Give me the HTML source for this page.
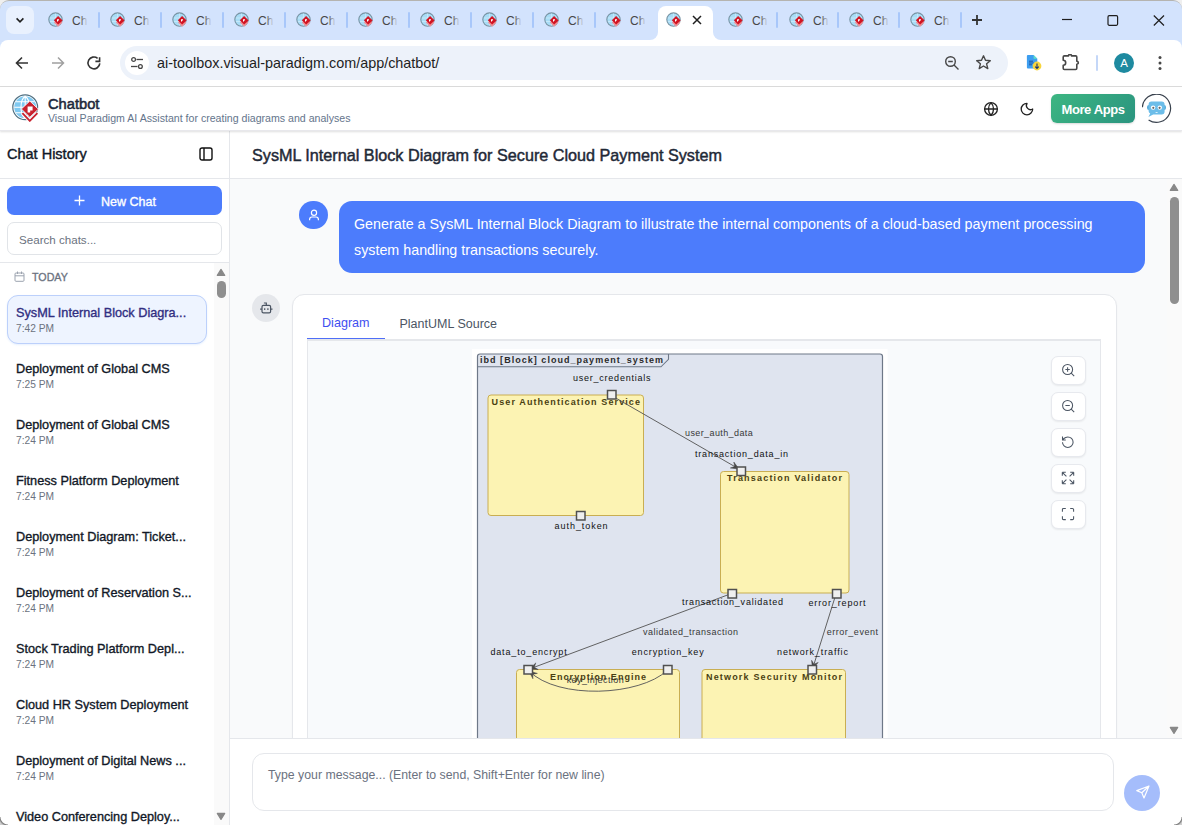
<!DOCTYPE html>
<html><head><meta charset="utf-8">
<style>
*{box-sizing:border-box;margin:0;padding:0}
html,body{width:1182px;height:825px;overflow:hidden;background:#fff;font-family:"Liberation Sans",sans-serif}
.a{position:absolute}
svg{display:block}
.ti{position:absolute;top:12px;width:16px;height:16px}
.tt{position:absolute;top:13px;font-size:12px;color:#474747;line-height:16px;width:15px;overflow:hidden;white-space:nowrap}
.fd{position:absolute;top:12px;width:9px;height:17px;background:linear-gradient(90deg,rgba(211,227,253,0),#d3e3fd 85%)}
.sep{position:absolute;top:12px;width:2px;height:16px;background:#a8c7fa;border-radius:1px}
.item{position:absolute;left:7px;width:200px;height:49px}
.item .it{position:absolute;left:9px;top:10.6px;font-size:12.7px;color:#111827;-webkit-text-stroke:0.35px #111827;white-space:nowrap;line-height:15px}
.item .im{position:absolute;left:9px;top:27.2px;font-size:10.2px;color:#6b7280;white-space:nowrap;line-height:13px}
.zb{position:absolute;left:1051px;width:34.5px;height:28.8px;background:#fff;border:1px solid #e7e9ee;border-radius:7px;box-shadow:0 1px 2px rgba(0,0,0,.07)}
.zb svg{position:absolute;left:9px;top:6px}
.dg text{font-family:"Liberation Sans",sans-serif}
</style></head><body>
<div class="a" style="left:0;top:0;width:1182px;height:40px;background:#d3e3fd"></div>
<div class="a" style="left:0;top:0;width:1182px;height:12px;background:#efefef"></div>
<div class="a" style="left:0;top:0;width:1182px;height:40px;background:#d3e3fd;border-top:1px solid #b5b4b0;border-radius:9px 9px 0 0"></div>
<div class="a" style="left:6px;top:6px;width:28px;height:28px;border-radius:8px;background:#e9f1fe"></div>
<svg class="a" style="left:14px;top:14px" width="12" height="12" viewBox="0 0 12 12"><path d="M2.6 4.4L6 7.8L9.4 4.4" fill="none" stroke="#1f1f1f" stroke-width="1.6"/></svg>
<div class="ti" style="left:48px"><svg width="16" height="16" viewBox="0 0 16 16"><circle cx="7.5" cy="7.6" r="6.7" fill="#a8dcf6" stroke="#7893a3" stroke-width="1.1"/><path d="M2 6H13M2 9.5H13M7.5 1.5V13.5" stroke="#d6f0fc" stroke-width="0.6"/><path d="M5.9 10.4L10.1 14.8L14.4 10.5L10.1 6.4Z" fill="#ee8f95"/><path d="M10.1 4.1L14.6 8.4L10.1 12.4L5.8 8.2Z" fill="#d11423"/><path d="M9 7.2H11V8.6H10V9.4H9Z" fill="#fff"/></svg></div><div class="tt" style="left:72px">Cha</div><div class="fd" style="left:80px"></div>
<div class="ti" style="left:110px"><svg width="16" height="16" viewBox="0 0 16 16"><circle cx="7.5" cy="7.6" r="6.7" fill="#a8dcf6" stroke="#7893a3" stroke-width="1.1"/><path d="M2 6H13M2 9.5H13M7.5 1.5V13.5" stroke="#d6f0fc" stroke-width="0.6"/><path d="M5.9 10.4L10.1 14.8L14.4 10.5L10.1 6.4Z" fill="#ee8f95"/><path d="M10.1 4.1L14.6 8.4L10.1 12.4L5.8 8.2Z" fill="#d11423"/><path d="M9 7.2H11V8.6H10V9.4H9Z" fill="#fff"/></svg></div><div class="tt" style="left:134px">Cha</div><div class="fd" style="left:142px"></div>
<div class="ti" style="left:172px"><svg width="16" height="16" viewBox="0 0 16 16"><circle cx="7.5" cy="7.6" r="6.7" fill="#a8dcf6" stroke="#7893a3" stroke-width="1.1"/><path d="M2 6H13M2 9.5H13M7.5 1.5V13.5" stroke="#d6f0fc" stroke-width="0.6"/><path d="M5.9 10.4L10.1 14.8L14.4 10.5L10.1 6.4Z" fill="#ee8f95"/><path d="M10.1 4.1L14.6 8.4L10.1 12.4L5.8 8.2Z" fill="#d11423"/><path d="M9 7.2H11V8.6H10V9.4H9Z" fill="#fff"/></svg></div><div class="tt" style="left:196px">Cha</div><div class="fd" style="left:204px"></div>
<div class="ti" style="left:234px"><svg width="16" height="16" viewBox="0 0 16 16"><circle cx="7.5" cy="7.6" r="6.7" fill="#a8dcf6" stroke="#7893a3" stroke-width="1.1"/><path d="M2 6H13M2 9.5H13M7.5 1.5V13.5" stroke="#d6f0fc" stroke-width="0.6"/><path d="M5.9 10.4L10.1 14.8L14.4 10.5L10.1 6.4Z" fill="#ee8f95"/><path d="M10.1 4.1L14.6 8.4L10.1 12.4L5.8 8.2Z" fill="#d11423"/><path d="M9 7.2H11V8.6H10V9.4H9Z" fill="#fff"/></svg></div><div class="tt" style="left:258px">Cha</div><div class="fd" style="left:266px"></div>
<div class="ti" style="left:296px"><svg width="16" height="16" viewBox="0 0 16 16"><circle cx="7.5" cy="7.6" r="6.7" fill="#a8dcf6" stroke="#7893a3" stroke-width="1.1"/><path d="M2 6H13M2 9.5H13M7.5 1.5V13.5" stroke="#d6f0fc" stroke-width="0.6"/><path d="M5.9 10.4L10.1 14.8L14.4 10.5L10.1 6.4Z" fill="#ee8f95"/><path d="M10.1 4.1L14.6 8.4L10.1 12.4L5.8 8.2Z" fill="#d11423"/><path d="M9 7.2H11V8.6H10V9.4H9Z" fill="#fff"/></svg></div><div class="tt" style="left:320px">Cha</div><div class="fd" style="left:328px"></div>
<div class="ti" style="left:358px"><svg width="16" height="16" viewBox="0 0 16 16"><circle cx="7.5" cy="7.6" r="6.7" fill="#a8dcf6" stroke="#7893a3" stroke-width="1.1"/><path d="M2 6H13M2 9.5H13M7.5 1.5V13.5" stroke="#d6f0fc" stroke-width="0.6"/><path d="M5.9 10.4L10.1 14.8L14.4 10.5L10.1 6.4Z" fill="#ee8f95"/><path d="M10.1 4.1L14.6 8.4L10.1 12.4L5.8 8.2Z" fill="#d11423"/><path d="M9 7.2H11V8.6H10V9.4H9Z" fill="#fff"/></svg></div><div class="tt" style="left:382px">Cha</div><div class="fd" style="left:390px"></div>
<div class="ti" style="left:420px"><svg width="16" height="16" viewBox="0 0 16 16"><circle cx="7.5" cy="7.6" r="6.7" fill="#a8dcf6" stroke="#7893a3" stroke-width="1.1"/><path d="M2 6H13M2 9.5H13M7.5 1.5V13.5" stroke="#d6f0fc" stroke-width="0.6"/><path d="M5.9 10.4L10.1 14.8L14.4 10.5L10.1 6.4Z" fill="#ee8f95"/><path d="M10.1 4.1L14.6 8.4L10.1 12.4L5.8 8.2Z" fill="#d11423"/><path d="M9 7.2H11V8.6H10V9.4H9Z" fill="#fff"/></svg></div><div class="tt" style="left:444px">Cha</div><div class="fd" style="left:452px"></div>
<div class="ti" style="left:482px"><svg width="16" height="16" viewBox="0 0 16 16"><circle cx="7.5" cy="7.6" r="6.7" fill="#a8dcf6" stroke="#7893a3" stroke-width="1.1"/><path d="M2 6H13M2 9.5H13M7.5 1.5V13.5" stroke="#d6f0fc" stroke-width="0.6"/><path d="M5.9 10.4L10.1 14.8L14.4 10.5L10.1 6.4Z" fill="#ee8f95"/><path d="M10.1 4.1L14.6 8.4L10.1 12.4L5.8 8.2Z" fill="#d11423"/><path d="M9 7.2H11V8.6H10V9.4H9Z" fill="#fff"/></svg></div><div class="tt" style="left:506px">Cha</div><div class="fd" style="left:514px"></div>
<div class="ti" style="left:544px"><svg width="16" height="16" viewBox="0 0 16 16"><circle cx="7.5" cy="7.6" r="6.7" fill="#a8dcf6" stroke="#7893a3" stroke-width="1.1"/><path d="M2 6H13M2 9.5H13M7.5 1.5V13.5" stroke="#d6f0fc" stroke-width="0.6"/><path d="M5.9 10.4L10.1 14.8L14.4 10.5L10.1 6.4Z" fill="#ee8f95"/><path d="M10.1 4.1L14.6 8.4L10.1 12.4L5.8 8.2Z" fill="#d11423"/><path d="M9 7.2H11V8.6H10V9.4H9Z" fill="#fff"/></svg></div><div class="tt" style="left:568px">Cha</div><div class="fd" style="left:576px"></div>
<div class="ti" style="left:606px"><svg width="16" height="16" viewBox="0 0 16 16"><circle cx="7.5" cy="7.6" r="6.7" fill="#a8dcf6" stroke="#7893a3" stroke-width="1.1"/><path d="M2 6H13M2 9.5H13M7.5 1.5V13.5" stroke="#d6f0fc" stroke-width="0.6"/><path d="M5.9 10.4L10.1 14.8L14.4 10.5L10.1 6.4Z" fill="#ee8f95"/><path d="M10.1 4.1L14.6 8.4L10.1 12.4L5.8 8.2Z" fill="#d11423"/><path d="M9 7.2H11V8.6H10V9.4H9Z" fill="#fff"/></svg></div><div class="tt" style="left:630px">Cha</div><div class="fd" style="left:638px"></div>
<div class="ti" style="left:728px"><svg width="16" height="16" viewBox="0 0 16 16"><circle cx="7.5" cy="7.6" r="6.7" fill="#a8dcf6" stroke="#7893a3" stroke-width="1.1"/><path d="M2 6H13M2 9.5H13M7.5 1.5V13.5" stroke="#d6f0fc" stroke-width="0.6"/><path d="M5.9 10.4L10.1 14.8L14.4 10.5L10.1 6.4Z" fill="#ee8f95"/><path d="M10.1 4.1L14.6 8.4L10.1 12.4L5.8 8.2Z" fill="#d11423"/><path d="M9 7.2H11V8.6H10V9.4H9Z" fill="#fff"/></svg></div><div class="tt" style="left:752px">Cha</div><div class="fd" style="left:760px"></div>
<div class="ti" style="left:789px"><svg width="16" height="16" viewBox="0 0 16 16"><circle cx="7.5" cy="7.6" r="6.7" fill="#a8dcf6" stroke="#7893a3" stroke-width="1.1"/><path d="M2 6H13M2 9.5H13M7.5 1.5V13.5" stroke="#d6f0fc" stroke-width="0.6"/><path d="M5.9 10.4L10.1 14.8L14.4 10.5L10.1 6.4Z" fill="#ee8f95"/><path d="M10.1 4.1L14.6 8.4L10.1 12.4L5.8 8.2Z" fill="#d11423"/><path d="M9 7.2H11V8.6H10V9.4H9Z" fill="#fff"/></svg></div><div class="tt" style="left:813px">Cha</div><div class="fd" style="left:821px"></div>
<div class="ti" style="left:849px"><svg width="16" height="16" viewBox="0 0 16 16"><circle cx="7.5" cy="7.6" r="6.7" fill="#a8dcf6" stroke="#7893a3" stroke-width="1.1"/><path d="M2 6H13M2 9.5H13M7.5 1.5V13.5" stroke="#d6f0fc" stroke-width="0.6"/><path d="M5.9 10.4L10.1 14.8L14.4 10.5L10.1 6.4Z" fill="#ee8f95"/><path d="M10.1 4.1L14.6 8.4L10.1 12.4L5.8 8.2Z" fill="#d11423"/><path d="M9 7.2H11V8.6H10V9.4H9Z" fill="#fff"/></svg></div><div class="tt" style="left:873px">Cha</div><div class="fd" style="left:881px"></div>
<div class="ti" style="left:910px"><svg width="16" height="16" viewBox="0 0 16 16"><circle cx="7.5" cy="7.6" r="6.7" fill="#a8dcf6" stroke="#7893a3" stroke-width="1.1"/><path d="M2 6H13M2 9.5H13M7.5 1.5V13.5" stroke="#d6f0fc" stroke-width="0.6"/><path d="M5.9 10.4L10.1 14.8L14.4 10.5L10.1 6.4Z" fill="#ee8f95"/><path d="M10.1 4.1L14.6 8.4L10.1 12.4L5.8 8.2Z" fill="#d11423"/><path d="M9 7.2H11V8.6H10V9.4H9Z" fill="#fff"/></svg></div><div class="tt" style="left:934px">Cha</div><div class="fd" style="left:942px"></div>
<div class="sep" style="left:98px"></div><div class="sep" style="left:160px"></div><div class="sep" style="left:222px"></div><div class="sep" style="left:284px"></div><div class="sep" style="left:346px"></div><div class="sep" style="left:408px"></div><div class="sep" style="left:470px"></div><div class="sep" style="left:532px"></div><div class="sep" style="left:594px"></div><div class="sep" style="left:776px"></div><div class="sep" style="left:837px"></div><div class="sep" style="left:898px"></div><div class="sep" style="left:960px"></div>
<div class="a" style="left:650px;top:32px;width:8px;height:8px;background:#fff"></div><div class="a" style="left:642px;top:24px;width:16px;height:16px;background:#d3e3fd;border-radius:0 0 8px 0"></div><div class="a" style="left:713px;top:32px;width:8px;height:8px;background:#fff"></div><div class="a" style="left:713px;top:24px;width:16px;height:16px;background:#d3e3fd;border-radius:0 0 0 8px"></div><div class="a" style="left:658px;top:6px;width:55px;height:34px;background:#fff;border-radius:8px 8px 0 0"></div>
<div class="ti" style="left:666px"><svg width="16" height="16" viewBox="0 0 16 16"><circle cx="7.5" cy="7.6" r="6.7" fill="#a8dcf6" stroke="#7893a3" stroke-width="1.1"/><path d="M2 6H13M2 9.5H13M7.5 1.5V13.5" stroke="#d6f0fc" stroke-width="0.6"/><path d="M5.9 10.4L10.1 14.8L14.4 10.5L10.1 6.4Z" fill="#ee8f95"/><path d="M10.1 4.1L14.6 8.4L10.1 12.4L5.8 8.2Z" fill="#d11423"/><path d="M9 7.2H11V8.6H10V9.4H9Z" fill="#fff"/></svg></div><svg class="a" style="left:692px;top:15px" width="10" height="10" viewBox="0 0 10 10"><path d="M1 1L9 9M9 1L1 9" stroke="#1f1f1f" stroke-width="1.5"/></svg>
<svg class="a" style="left:971px;top:14px" width="12" height="12" viewBox="0 0 12 12"><path d="M6 1V11M1 6H11" stroke="#333" stroke-width="1.8"/></svg>
<svg class="a" style="left:1061px;top:14px" width="12" height="12" viewBox="0 0 12 12"><path d="M1 5.5H11" stroke="#1f1f1f" stroke-width="1.2"/></svg><svg class="a" style="left:1107px;top:15px" width="12" height="11" viewBox="0 0 12 11"><rect x="1" y="0.7" width="9.6" height="9.6" rx="1.2" fill="none" stroke="#1f1f1f" stroke-width="1.2"/></svg><svg class="a" style="left:1153px;top:15px" width="12" height="11" viewBox="0 0 12 11"><path d="M0.8 0.5L11 10.5M11 0.5L0.8 10.5" stroke="#1f1f1f" stroke-width="1.2"/></svg>
<div class="a" style="left:0;top:40px;width:1182px;height:47px;background:#fff;border-bottom:1px solid #dcdcdc;border-radius:8px 8px 0 0"></div>
<div class="a" style="left:0;top:40px;width:1182px;height:10px;background:#d3e3fd"></div><div class="a" style="left:0;top:40px;width:1182px;height:46px;background:#fff;border-radius:8px 8px 0 0"></div>
<svg class="a" style="left:14px;top:55px" width="16" height="16" viewBox="0 0 16 16"><path d="M14 8H2.8M8 2.5L2.5 8L8 13.5" fill="none" stroke="#333" stroke-width="1.6"/></svg><svg class="a" style="left:50px;top:55px" width="16" height="16" viewBox="0 0 16 16"><path d="M2 8H13.2M8 2.5L13.5 8L8 13.5" fill="none" stroke="#a0a0a0" stroke-width="1.5"/></svg><svg class="a" style="left:86px;top:55px" width="16" height="16" viewBox="0 0 16 16"><path d="M13.8 8.4A5.9 5.9 0 1 1 11.6 3.3" fill="none" stroke="#333" stroke-width="1.6"/><path d="M9.4 6.4H13.6V2.2" fill="none" stroke="#333" stroke-width="1.6"/></svg>
<div class="a" style="left:120px;top:46px;width:888px;height:34px;border-radius:17px;background:#edf2fa"></div>
<div class="a" style="left:125px;top:51px;width:24px;height:24px;border-radius:12px;background:#fff"></div><svg class="a" style="left:129px;top:55px" width="16" height="16" viewBox="0 0 16 16"><circle cx="4.6" cy="4.5" r="1.9" fill="none" stroke="#474747" stroke-width="1.3"/><path d="M7.5 4.5H14" stroke="#474747" stroke-width="1.3"/><circle cx="11.4" cy="11.5" r="1.9" fill="none" stroke="#474747" stroke-width="1.3"/><path d="M2 11.5H8.5" stroke="#474747" stroke-width="1.3"/></svg>
<div class="a" style="left:157px;top:54px;font-size:14.4px;line-height:18px;color:#1f1f1f;white-space:nowrap">ai-toolbox.visual-paradigm.com/app/chatbot/</div>
<svg class="a" style="left:944px;top:55px" width="16" height="16" viewBox="0 0 16 16"><circle cx="6.5" cy="6.5" r="4.8" fill="none" stroke="#474747" stroke-width="1.4"/><path d="M4.2 6.5H8.8M10 10L14.5 14.5" stroke="#474747" stroke-width="1.4"/></svg><svg class="a" style="left:975px;top:54px" width="17" height="17" viewBox="0 0 17 17"><path d="M8.5 1.8L10.5 6.3L15.3 6.7L11.6 9.8L12.8 14.6L8.5 12L4.2 14.6L5.4 9.8L1.7 6.7L6.5 6.3Z" fill="none" stroke="#474747" stroke-width="1.4" stroke-linejoin="round"/></svg>
<svg class="a" style="left:1025px;top:54px" width="18" height="18" viewBox="0 0 18 18"><path d="M2.9 1H8.6L12.3 4.7V13.6Q12.3 14.6 11.3 14.6H2.9Q1.9 14.6 1.9 13.6V2Q1.9 1 2.9 1Z" fill="#3d9ef0"/><path d="M8.6 1V4.7H12.3Z" fill="#5fe0c6"/><path d="M4 7.2H8M4 9H8.6M4 10.8H7" stroke="#1d4f9c" stroke-width="0.9"/><circle cx="12" cy="12" r="4.4" fill="#f7d53c"/><path d="M12 9.4V14.4M10.2 12.6L12 14.4L13.8 12.6" fill="none" stroke="#1b3470" stroke-width="1.1"/></svg><svg class="a" style="left:1062px;top:54px" width="18" height="18" viewBox="0 0 18 18"><path d="M2.4 1.9H6.5A1.5 1.5 0 0 1 9.5 1.9H13.6Q14.8 1.9 14.8 3.1V7.2A1.5 1.5 0 0 1 14.8 10.2V14.3Q14.8 15.5 13.6 15.5H2.4Q1.2 15.5 1.2 14.3V11.3A2.5 2.5 0 0 0 1.2 6.3V3.1Q1.2 1.9 2.4 1.9Z" fill="none" stroke="#474747" stroke-width="1.6" stroke-linejoin="round"/></svg>
<div class="a" style="left:1096px;top:55px;width:2px;height:16px;background:#c4d7f8;border-radius:1px"></div><div class="a" style="left:1114px;top:53px;width:20px;height:20px;border-radius:10px;background:#1e8aa0;color:#fff;font-size:11.5px;line-height:20px;text-align:center">A</div><svg class="a" style="left:1154px;top:55px" width="12" height="16" viewBox="0 0 12 16"><circle cx="6" cy="2.5" r="1.5" fill="#474747"/><circle cx="6" cy="8" r="1.5" fill="#474747"/><circle cx="6" cy="13.5" r="1.5" fill="#474747"/></svg>
<div class="a" style="left:0;top:87px;width:1182px;height:44px;background:#fff;box-shadow:0 1px 2px rgba(0,0,0,.13);border-bottom:1px solid #e8e8ec;z-index:2"></div>
<div class="a" style="left:12px;top:94px;z-index:3"><svg width="28" height="28" viewBox="0 0 28 28"><circle cx="13.2" cy="13.3" r="12.4" fill="#fff" stroke="#4f6f80" stroke-width="1.2"/><circle cx="13.2" cy="13.3" r="11" fill="#7fc9f1"/><path d="M2.2 13.3H24.2M13.2 2.3V24.3M3.6 7.8H22.8M3.6 18.8H22.8M13.2 2.3C7.6 6 7.6 20.6 13.2 24.3M13.2 2.3C18.8 6 18.8 20.6 13.2 24.3" fill="none" stroke="#fff" stroke-width="1.1"/><path d="M10.4 19.2L17.8 26.8L25.4 19.2" fill="none" stroke="#fff" stroke-width="3.4"/><path d="M10.4 19.2L17.8 26.8L25.4 19.2" fill="none" stroke="#c8222e" stroke-width="1.9"/><path d="M17.8 7L26.4 15.2L17.8 23.2L9.4 15Z" fill="#c8222e" stroke="#fff" stroke-width="0.8"/><path d="M15.6 12.6H20.6V16.4H18.2V18.6H15.6Z" fill="#fff"/></svg></div>
<div class="a" style="left:48px;top:95.6px;font-size:14.7px;line-height:17px;color:#1e293b;-webkit-text-stroke:0.55px #1e293b;white-space:nowrap;z-index:3">Chatbot</div>
<div class="a" style="left:48px;top:112px;font-size:10.6px;line-height:13px;color:#64748b;white-space:nowrap;z-index:3">Visual Paradigm AI Assistant for creating diagrams and analyses</div>
<svg class="a" style="left:983px;top:100.5px;z-index:3" width="16" height="16" viewBox="0 0 24 24"><circle cx="12" cy="12" r="9.6" fill="none" stroke="#222" stroke-width="2"/><path d="M12 2.4A14 14 0 0 0 12 21.6A14 14 0 0 0 12 2.4M2.4 12H21.6" fill="none" stroke="#222" stroke-width="2"/></svg><svg class="a" style="left:1019px;top:100.5px;z-index:3" width="16" height="16" viewBox="0 0 24 24"><path d="M12 3.5A6.2 6.2 0 0 0 20.5 12A8.6 8.6 0 1 1 12 3.5Z" fill="none" stroke="#222" stroke-width="2" stroke-linejoin="round"/></svg>
<div class="a" style="left:1051px;top:94px;width:84px;height:29px;border-radius:6px;background:linear-gradient(135deg,#3db682,#2a947f);color:#fff;font-weight:bold;font-size:13px;letter-spacing:-0.4px;line-height:31px;text-align:center;box-shadow:0 1px 2px rgba(0,0,0,.15);z-index:3">More Apps</div>
<div class="a" style="left:1142px;top:94px;z-index:3"><svg width="30" height="30" viewBox="0 0 30 30"><path d="M0.4 13.3A14.1 14.1 0 1 1 6.6 25.9" fill="none" stroke="#39424e" stroke-width="1.2"/><rect x="5" y="11" width="19" height="5" rx="2" fill="#5aaedb"/><path d="M9.5 7.4H19.6Q22.6 7.4 22.6 10.4V17.6Q22.6 20.6 19.6 20.6H11.2L6.4 23L8.2 19.6Q6.6 18.6 6.6 17V10.4Q6.6 7.4 9.5 7.4Z" fill="#6cbde9"/><circle cx="11.1" cy="13.6" r="2.2" fill="#fff"/><circle cx="17.8" cy="13.6" r="2.2" fill="#fff"/><circle cx="11.3" cy="13.8" r="1.1" fill="#666"/><circle cx="17.6" cy="13.8" r="1.1" fill="#666"/><path d="M13.6 18.5H15.6" stroke="#d8eefa" stroke-width="1"/></svg></div>
<div class="a" style="left:0;top:130px;width:230px;height:695px;background:#fff;border-right:1px solid #e5e7eb"></div>
<div class="a" style="left:7px;top:146.2px;font-size:14.5px;line-height:17px;color:#111827;-webkit-text-stroke:0.4px #111827;white-space:nowrap">Chat History</div>
<svg class="a" style="left:199px;top:147px" width="14" height="14" viewBox="0 0 14 14"><rect x="1" y="1" width="12" height="12" rx="2" fill="none" stroke="#111" stroke-width="1.4"/><path d="M5 1V13" stroke="#111" stroke-width="1.4"/></svg>
<div class="a" style="left:0;top:178px;width:229px;height:1px;background:#e5e7eb"></div>
<div class="a" style="left:7px;top:186px;width:215px;height:29px;border-radius:7px;background:#4c7cfc"></div>
<svg class="a" style="left:74px;top:195px" width="11" height="11" viewBox="0 0 11 11"><path d="M5.5 0.5V10.5M0.5 5.5H10.5" stroke="#fff" stroke-width="1.3"/></svg><div class="a" style="left:101px;top:194.6px;font-size:12.5px;line-height:15px;color:#fff;-webkit-text-stroke:0.35px #fff;white-space:nowrap">New Chat</div>
<div class="a" style="left:7px;top:222px;width:215px;height:33px;border-radius:7px;background:#fff;border:1px solid #e1e4e8"></div>
<div class="a" style="left:19px;top:233px;font-size:11.6px;line-height:14px;color:#6b7280;white-space:nowrap">Search chats...</div>
<div class="a" style="left:0;top:262px;width:229px;height:1px;background:#e5e7eb"></div>
<div class="a" style="left:214px;top:263px;width:15px;height:562px;background:#fafafa"></div>
<svg class="a" style="left:216.4px;top:267.5px" width="10" height="9" viewBox="0 0 10 9"><path d="M1.3 7.4H8.7L5 1.4Z" fill="#888" stroke="#888" stroke-width="1.2" stroke-linejoin="round"/></svg><div class="a" style="left:217px;top:281px;width:9px;height:17px;border-radius:5px;background:#8f8f8f"></div><svg class="a" style="left:216.4px;top:811.5px" width="10" height="9" viewBox="0 0 10 9"><path d="M1.3 1.4H8.7L5 7.4Z" fill="#888" stroke="#888" stroke-width="1.2" stroke-linejoin="round"/></svg>
<svg class="a" style="left:14px;top:271px" width="11" height="11" viewBox="0 0 11 11"><rect x="1" y="2" width="9" height="8.3" rx="1" fill="none" stroke="#9ca3af" stroke-width="1"/><path d="M1 4.8H10M3.5 0.5V3M7.5 0.5V3" stroke="#9ca3af" stroke-width="1"/></svg><div class="a" style="left:32px;top:271px;font-size:10.7px;line-height:13px;color:#6b7280;-webkit-text-stroke:0.3px #6b7280;white-space:nowrap">TODAY</div>
<div class="item" style="top:295px;background:#eef4ff;border:1px solid #bcd0fb;border-radius:11px;box-shadow:0 1px 2px rgba(59,130,246,.12)"><div class="it" style="color:#312e81;-webkit-text-stroke:0.35px #312e81;left:8px;top:9.6px">SysML Internal Block Diagra...</div><div class="im" style="left:8px;top:26.2px">7:42 PM</div></div>
<div class="item" style="top:351px"><div class="it">Deployment of Global CMS</div><div class="im">7:25 PM</div></div>
<div class="item" style="top:407px"><div class="it">Deployment of Global CMS</div><div class="im">7:24 PM</div></div>
<div class="item" style="top:463px"><div class="it">Fitness Platform Deployment</div><div class="im">7:24 PM</div></div>
<div class="item" style="top:519px"><div class="it">Deployment Diagram: Ticket...</div><div class="im">7:24 PM</div></div>
<div class="item" style="top:575px"><div class="it">Deployment of Reservation S...</div><div class="im">7:24 PM</div></div>
<div class="item" style="top:631px"><div class="it">Stock Trading Platform Depl...</div><div class="im">7:24 PM</div></div>
<div class="item" style="top:687px"><div class="it">Cloud HR System Deployment</div><div class="im">7:24 PM</div></div>
<div class="item" style="top:743px"><div class="it">Deployment of Digital News ...</div><div class="im">7:24 PM</div></div>
<div class="item" style="top:799px"><div class="it">Video Conferencing Deploy...</div><div class="im">7:24 PM</div></div>
<div class="a" style="left:230px;top:130px;width:952px;height:695px;background:#f9fafb"></div>
<div class="a" style="left:230px;top:130px;width:952px;height:49px;background:#fff;border-bottom:1px solid #e5e7eb"></div>
<div class="a" style="left:252.0px;top:145.19px;font-size:16.20px;line-height:20px;white-space:nowrap;color:#1f2937;-webkit-text-stroke:0.45px #1f2937">SysML Internal Block Diagram for Secure Cloud Payment System</div>
<div class="a" style="left:1167px;top:179px;width:15px;height:559px;background:#fafafa"></div>
<svg class="a" style="left:1169px;top:183px" width="10" height="9" viewBox="0 0 10 9"><path d="M1.3 7.4H8.7L5 1.4Z" fill="#888" stroke="#888" stroke-width="1.2" stroke-linejoin="round"/></svg><div class="a" style="left:1170px;top:197px;width:9px;height:107px;border-radius:5px;background:#8f8f8f"></div><svg class="a" style="left:1169px;top:726px" width="10" height="9" viewBox="0 0 10 9"><path d="M1.3 1.4H8.7L5 7.4Z" fill="#888" stroke="#888" stroke-width="1.2" stroke-linejoin="round"/></svg>
<div class="a" style="left:299px;top:201px;width:28.6px;height:28px;border-radius:14px;background:#4c7cfc"></div><svg class="a" style="left:306px;top:206.6px" width="16" height="16" viewBox="0 0 16 16"><circle cx="8" cy="5.8" r="2.6" fill="none" stroke="#fff" stroke-width="1.2"/><path d="M3.6 13.2V12.4Q3.6 10 6 10H10Q12.4 10 12.4 12.4V13.2" fill="none" stroke="#fff" stroke-width="1.2"/></svg>
<div class="a" style="left:339px;top:201px;width:806px;height:72px;border-radius:13px;background:#4c7cfc"></div>
<div class="a" style="left:354.0px;top:215.05px;font-size:14.30px;line-height:18px;white-space:nowrap;color:#fff">Generate a SysML Internal Block Diagram to illustrate the internal components of a cloud-based payment processing</div>
<div class="a" style="left:354.0px;top:241.05px;font-size:14.30px;line-height:18px;white-space:nowrap;color:#fff">system handling transactions securely.</div>
<div class="a" style="left:252px;top:294px;width:28px;height:28px;border-radius:14px;background:#e5e7eb"></div><svg class="a" style="left:259px;top:301px" width="15" height="15" viewBox="0 0 15 15"><path d="M7.3 4.4V2H4.9" fill="none" stroke="#4b5563" stroke-width="1.2"/><rect x="3" y="4.4" width="8.6" height="7.4" rx="1.4" fill="none" stroke="#4b5563" stroke-width="1.2"/><path d="M1.1 8.2H3M11.6 8.2H13.5M5.7 7.2V9.1M8.9 7.2V9.1" stroke="#4b5563" stroke-width="1.2"/></svg>
<div class="a" style="left:292px;top:294px;width:825px;height:600px;border-radius:12px;background:#fff;border:1px solid #e5e7eb;box-shadow:0 1px 2px rgba(0,0,0,.04)"></div>
<div class="a" style="left:322.0px;top:314.63px;font-size:12.60px;line-height:16px;white-space:nowrap;color:#3f4ff0">Diagram</div>
<div class="a" style="left:399.5px;top:315.67px;font-size:12.50px;line-height:16px;white-space:nowrap;color:#4b5563">PlantUML Source</div>
<div class="a" style="left:307px;top:339px;width:794px;height:2px;background:#e5e7eb"></div><div class="a" style="left:307px;top:337.5px;width:78px;height:1.5px;background:#4f6ef7"></div>
<div class="a" style="left:307px;top:341px;width:794px;height:500px;background:#f8fafc;border:1px solid #e5e7eb;border-top:none"></div>
<div class="a" style="left:308px;top:340px;width:792px;height:398px;overflow:hidden"><svg class="dg" width="792" height="398" viewBox="308 340 792 398"><style>.bt{font:bold 9px "Liberation Sans";fill:#4a3f12}.pl{font:9px "Liberation Sans";fill:#111}.el{font:9px "Liberation Sans";fill:#383838}.fl{font:bold 9px "Liberation Sans";fill:#2b2b2b}</style><rect x="472" y="349" width="415.5" height="500" fill="#fff"/><rect x="477.5" y="354" width="405" height="500" rx="2.5" fill="#dfe4ef" stroke="#6e7888" stroke-width="1.2"/><path d="M477.5 366.8H661L668.5 359.3V354" fill="none" stroke="#6e7888" stroke-width="1.1"/><text x="480.0" y="362.7" textLength="183.0" lengthAdjust="spacing" class="fl">ibd [Block] cloud_payment_system</text><rect x="488" y="395" width="155.5" height="120.5" rx="3" fill="#fcf3b3" stroke="#c9ae52" stroke-width="1"/><rect x="720.5" y="471.5" width="128.5" height="121.5" rx="3" fill="#fcf3b3" stroke="#c9ae52" stroke-width="1"/><rect x="516.5" y="669.5" width="163" height="120" rx="3" fill="#fcf3b3" stroke="#c9ae52" stroke-width="1"/><rect x="702" y="669.5" width="143.5" height="120" rx="3" fill="#fcf3b3" stroke="#c9ae52" stroke-width="1"/><text x="491.6" y="405.0" textLength="148.4" lengthAdjust="spacing" class="bt">User Authentication Service</text><text x="727.0" y="480.6" textLength="115.0" lengthAdjust="spacing" class="bt">Transaction Validator</text><text x="550.0" y="680.0" textLength="96.0" lengthAdjust="spacing" class="bt">Encryption Engine</text><text x="706.0" y="680.0" textLength="136.0" lengthAdjust="spacing" class="bt">Network Security Monitor</text><path d="M614 397L739 469" stroke="#5a5a5a" stroke-width="0.95" fill="none"/><path d="M731.5 593.5L529.5 669" stroke="#5a5a5a" stroke-width="0.95" fill="none"/><path d="M836 594L812.5 669" stroke="#5a5a5a" stroke-width="0.95" fill="none"/><path d="M667 670.5C640 696 558 700 529 671" stroke="#5a5a5a" stroke-width="0.95" fill="none"/><path d="M739 469L730.3 468L734.7 466.5L733.8 462Z" fill="#454545" stroke="#454545" stroke-width="0.5" stroke-linejoin="round"/><path d="M529.5 669L535.8 662.9L534.2 667.25L538.2 669.5Z" fill="#454545" stroke="#454545" stroke-width="0.5" stroke-linejoin="round"/><path d="M812.5 669L811.6 660.3L814 664.2L818.2 662.4Z" fill="#454545" stroke="#454545" stroke-width="0.5" stroke-linejoin="round"/><path d="M529 671L537.4 673.4L532.8 674.2L532.9 678.8Z" fill="#454545" stroke="#454545" stroke-width="0.5" stroke-linejoin="round"/><rect x="607.5" y="390.5" width="8.5" height="8.5" fill="#efefef" stroke="#505050" stroke-width="1.5"/><rect x="576.5" y="511.5" width="8.5" height="8.5" fill="#efefef" stroke="#505050" stroke-width="1.5"/><rect x="737.0" y="467.0" width="8.5" height="8.5" fill="#efefef" stroke="#505050" stroke-width="1.5"/><rect x="728.0" y="589.5" width="8.5" height="8.5" fill="#efefef" stroke="#505050" stroke-width="1.5"/><rect x="832.5" y="589.5" width="8.5" height="8.5" fill="#efefef" stroke="#505050" stroke-width="1.5"/><rect x="524.0" y="665.5" width="8.5" height="8.5" fill="#efefef" stroke="#505050" stroke-width="1.5"/><rect x="663.5" y="665.5" width="8.5" height="8.5" fill="#efefef" stroke="#505050" stroke-width="1.5"/><rect x="808.0" y="665.5" width="8.5" height="8.5" fill="#efefef" stroke="#505050" stroke-width="1.5"/><text x="573.0" y="381.0" textLength="77.5" lengthAdjust="spacing" class="pl">user_credentials</text><text x="554.6" y="528.7" textLength="53.0" lengthAdjust="spacing" class="pl">auth_token</text><text x="695.0" y="456.8" textLength="93.0" lengthAdjust="spacing" class="pl">transaction_data_in</text><text x="682.0" y="605.0" textLength="101.0" lengthAdjust="spacing" class="pl">transaction_validated</text><text x="808.5" y="606.0" textLength="57.0" lengthAdjust="spacing" class="pl">error_report</text><text x="490.4" y="655.0" textLength="76.3" lengthAdjust="spacing" class="pl">data_to_encrypt</text><text x="631.7" y="655.0" textLength="72.0" lengthAdjust="spacing" class="pl">encryption_key</text><text x="777.0" y="655.0" textLength="71.0" lengthAdjust="spacing" class="pl">network_traffic</text><text x="685.0" y="435.7" textLength="67.7" lengthAdjust="spacing" class="el">user_auth_data</text><text x="643.0" y="634.8" textLength="95.0" lengthAdjust="spacing" class="el">validated_transaction</text><text x="826.7" y="635.0" textLength="51.3" lengthAdjust="spacing" class="el">error_event</text><text x="566.7" y="683.4" textLength="57.0" lengthAdjust="spacing" class="el">key_injection</text></svg></div>
<div class="zb" style="top:356px"><svg width="15" height="15" viewBox="0 0 15 15"><circle cx="6.6" cy="6.5" r="5" fill="none" stroke="#4b5563" stroke-width="1.05"/><path d="M10.2 10.1L13.2 13.1M6.6 4.3V8.7M4.4 6.5H8.8" fill="none" stroke="#4b5563" stroke-width="1.05"/></svg></div><div class="zb" style="top:392px"><svg width="15" height="15" viewBox="0 0 15 15"><circle cx="6.6" cy="6.5" r="5" fill="none" stroke="#4b5563" stroke-width="1.05"/><path d="M10.2 10.1L13.2 13.1M4.4 6.5H8.8" fill="none" stroke="#4b5563" stroke-width="1.05"/></svg></div><div class="zb" style="top:428px"><svg width="15" height="15" viewBox="0 0 15 15"><path d="M1.5 7.2A5.3 5.3 0 1 0 6.8 1.9A5.7 5.7 0 0 0 2.9 3.5L1.5 4.9M1.5 1.6V4.9H4.8" fill="none" stroke="#4b5563" stroke-width="1.05"/></svg></div><div class="zb" style="top:464px"><svg width="15" height="15" viewBox="0 0 15 15"><path d="M1.3 1.3L5.4 5.4M1.3 1.3V4.8M1.3 1.3H4.8M12.7 1.3L8.6 5.4M12.7 1.3V4.8M12.7 1.3H9.2M1.3 12.7L5.4 8.6M1.3 12.7V9.2M1.3 12.7H4.8M12.7 12.7L8.6 8.6M12.7 12.7V9.2M12.7 12.7H9.2" fill="none" stroke="#4b5563" stroke-width="1.05"/></svg></div><div class="zb" style="top:500px"><svg width="15" height="15" viewBox="0 0 15 15"><path d="M1.4 4.8V2.6Q1.4 1.4 2.6 1.4H4.8M9.2 1.4H11.4Q12.6 1.4 12.6 2.6V4.8M12.6 9.2V11.4Q12.6 12.6 11.4 12.6H9.2M4.8 12.6H2.6Q1.4 12.6 1.4 11.4V9.2" fill="none" stroke="#4b5563" stroke-width="1.05"/></svg></div>
<div class="a" style="left:230px;top:738px;width:952px;height:87px;background:#fff;border-top:1px solid #e5e7eb"></div>
<div class="a" style="left:252px;top:753px;width:862px;height:58px;border-radius:12px;background:#fff;border:1px solid #e5e7eb"></div>
<div class="a" style="left:268.0px;top:768.04px;font-size:12.30px;line-height:15px;white-space:nowrap;color:#6b7280">Type your message... (Enter to send, Shift+Enter for new line)</div>
<div class="a" style="left:1124px;top:775px;width:36px;height:36px;border-radius:18px;background:#a5bdfb"></div><svg class="a" style="left:1133.8px;top:783.2px" width="18" height="18" viewBox="0 0 18 18"><path d="M15 3L2.8 7.6L7.8 9.8L10 15Z M15 3L7.8 9.8" fill="none" stroke="#fff" stroke-width="1.2" stroke-linejoin="round"/></svg>
<div class="a" style="left:0;top:817px;width:8px;height:8px;background:radial-gradient(circle at 100% 0,rgba(0,0,0,0) 7px,#7a7a7a 8px,#cfcfcf 9.5px)"></div><div class="a" style="left:1174px;top:817px;width:8px;height:8px;background:radial-gradient(circle at 0 0,rgba(0,0,0,0) 7px,#7a7a7a 8px,#cfcfcf 9.5px)"></div>
</body></html>
